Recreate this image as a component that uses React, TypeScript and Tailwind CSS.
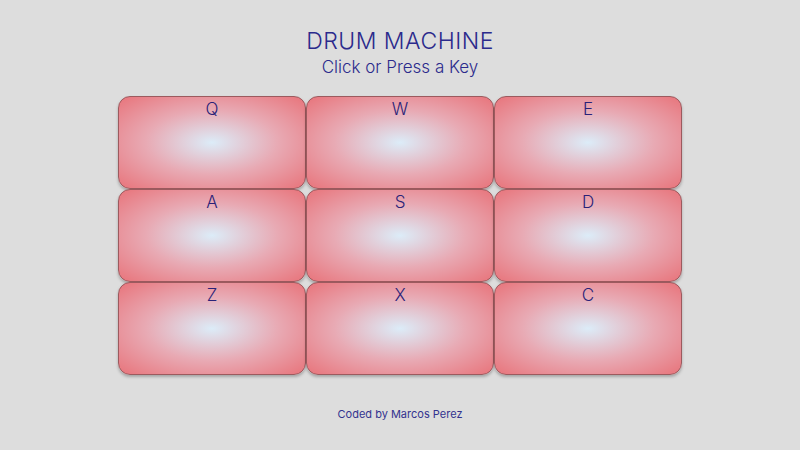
const pads = ["Q", "W", "E", "A", "S", "D", "Z", "X", "C"];

export default function App() {
  return (
    <div
      className="flex h-[450px] w-[800px] flex-col items-center bg-[#dddddd] text-[#2b2a8c]"
      style={{ fontFamily: "Inter, 'DejaVu Sans', sans-serif" }}
    >
      <h1 className="mt-[28px] text-[23px] font-light leading-[26px] tracking-[0.5px]">DRUM MACHINE</h1>
      <p className="mt-[2px] text-[17px] font-light leading-[22px]">Click or Press a Key</p>

      <div className="mt-[18px] grid grid-cols-3">
        {pads.map((key) => (
          <button
            key={key}
            type="button"
            className="flex h-[93px] w-[188px] justify-center rounded-[12px] border border-[#9c5a5e] bg-[radial-gradient(ellipse_at_center,#dcecf8_0%,#e8aab4_50%,#e8747b_100%)] pt-[2px] shadow-[0_2px_3px_rgba(0,0,0,0.25)]"
          >
            <span className="text-[17px] font-light leading-[20px] text-[#2a2278]">{key}</span>
          </button>
        ))}
      </div>

      <p className="mt-[32px] text-[11px] leading-[14px] text-[#33338f]">Coded by Marcos Perez</p>
    </div>
  );
}
